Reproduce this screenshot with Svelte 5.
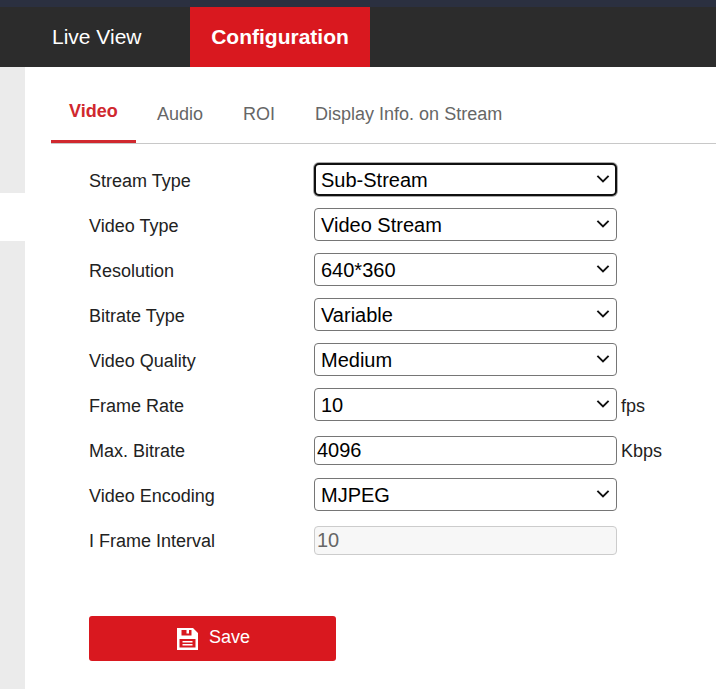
<script>
	const rows = [
		{ label: 'Stream Type', value: 'Sub-Stream', focused: true },
		{ label: 'Video Type', value: 'Video Stream' },
		{ label: 'Resolution', value: '640*360' },
		{ label: 'Bitrate Type', value: 'Variable' },
		{ label: 'Video Quality', value: 'Medium' },
		{ label: 'Frame Rate', value: '10', unit: 'fps' },
		{ label: 'Max. Bitrate', input: '4096', unit: 'Kbps' },
		{ label: 'Video Encoding', value: 'MJPEG' },
		{ label: 'I Frame Interval', input: '10', disabled: true }
	];
	const tabs = ['Video', 'Audio', 'ROI', 'Display Info. on Stream'];
</script>

<div class="page">
	<div class="topline"></div>
	<header class="nav">
		<div class="nav-item">Live View</div>
		<div class="nav-item active">Configuration</div>
	</header>
	<div class="body">
		<aside class="side">
			<div class="side-block first"></div>
			<div class="side-gap"></div>
			<div class="side-block rest"></div>
		</aside>
		<main class="content">
			<nav class="tabs">
				{#each tabs as tab, i}
					<div class="tab" class:current={i === 0}>{tab}</div>
				{/each}
			</nav>
			<form class="form">
				{#each rows as row}
					<div class="row">
						<span class="label">{row.label}</span>
						{#if row.input}
							<input class="field" value={row.input} disabled={row.disabled} />
						{:else}
							<div class="select" class:focused={row.focused}>
								<span>{row.value}</span>
								<svg width="16" height="16" viewBox="0 0 16 16">
									<path d="M2.4 4.8 L8 10.4 L13.6 4.8" fill="none" stroke="#111" stroke-width="1.9" />
								</svg>
							</div>
						{/if}
						{#if row.unit}<span class="unit">{row.unit}</span>{/if}
					</div>
				{/each}
				<button type="button" class="save">
					<svg width="24" height="24" viewBox="0 0 24 24">
						<path
							fill="#fff"
							fill-rule="evenodd"
							d="M2 1 H18 L23 6 V23 H2 Z M6.5 3 V8.5 H16.5 V3 H14 V6.5 H11.5 V3 Z M4.5 20.5 H20.5 V12 H4.5 Z M7.5 14 H17.5 V15.5 H7.5 Z M7.5 17 H17.5 V18.5 H7.5 Z"
						/>
					</svg>
					<span>Save</span>
				</button>
			</form>
		</main>
	</div>
</div>

<style>
	:global(body) {
		margin: 0;
		background: #fff;
	}
	.page {
		width: 716px;
		height: 689px;
		overflow: hidden;
		font-family: 'Liberation Sans', Arial, sans-serif;
		display: flex;
		flex-direction: column;
	}
	.topline {
		height: 7px;
		background: #2b3040;
	}
	.nav {
		height: 60px;
		background: #2c2c2c;
		display: flex;
		color: #fff;
	}
	.nav-item {
		display: flex;
		align-items: center;
		margin-left: 52px;
		width: 138px;
		font-size: 21px;
	}
	.nav-item.active {
		margin-left: 0;
		width: 180px;
		justify-content: center;
		background: #d9181f;
		font-weight: bold;
	}
	.body {
		flex: 1;
		display: flex;
	}
	.side {
		width: 25px;
		display: flex;
		flex-direction: column;
	}
	.side-block {
		background: #ebebeb;
	}
	.side-block.first {
		height: 126px;
	}
	.side-gap {
		height: 48px;
	}
	.side-block.rest {
		flex: 1;
	}
	.content {
		flex: 1;
		padding-left: 26px;
	}
	.tabs {
		display: flex;
		border-bottom: 1px solid #c8c8c8;
		box-sizing: border-box;
		height: 77px;
	}
	.tab {
		padding: 37px 20px 0;
		font-size: 18px;
		color: #666;
		height: 76px;
		box-sizing: border-box;
	}
	.tab.current {
		padding: 34px 18px 0;
		width: 85px;
		color: #d0282e;
		font-weight: bold;
		border-bottom: 3px solid #d0282e;
		margin-right: 1px;
	}
	.form {
		padding: 19px 0 0 38px;
	}
	.row {
		height: 45px;
		display: flex;
		align-items: flex-start;
		font-size: 18px;
		color: #222;
	}
	.label {
		width: 225px;
		padding-top: 8px;
		flex: none;
	}
	.select,
	.field {
		width: 303px;
		box-sizing: border-box;
		font-family: inherit;
		font-size: 20px;
		color: #000;
		background: #fff;
		border: 1px solid #767676;
		border-radius: 4px;
	}
	.select {
		height: 33px;
		padding: 2px 5px 0;
		display: flex;
		align-items: center;
		justify-content: space-between;
	}
	.select span {
		margin-left: 1px;
	}
	.select svg {
		margin-top: -3px;
	}
	.select.focused {
		border: 2px solid #101010;
		padding: 2px 4px 0;
		box-shadow: 0 0 0 1px #aaa;
		border-radius: 5px;
	}
	.field {
		height: 29px;
		margin-top: 3px;
		padding: 0 1px 0 2px;
		outline: none;
	}
	.field:disabled {
		background: #f7f7f7;
		border-color: #ccc;
		color: #666;
	}
	.unit {
		padding: 8px 0 0 4px;
	}
	.save {
		width: 247px;
		height: 45px;
		margin-top: 48px;
		border: none;
		border-radius: 3px;
		background: #d9181f;
		color: #fff;
		font-family: inherit;
		font-size: 18px;
		display: flex;
		align-items: center;
		justify-content: center;
		gap: 10px;
	}
	.save span {
		margin-top: -2px;
	}
</style>
